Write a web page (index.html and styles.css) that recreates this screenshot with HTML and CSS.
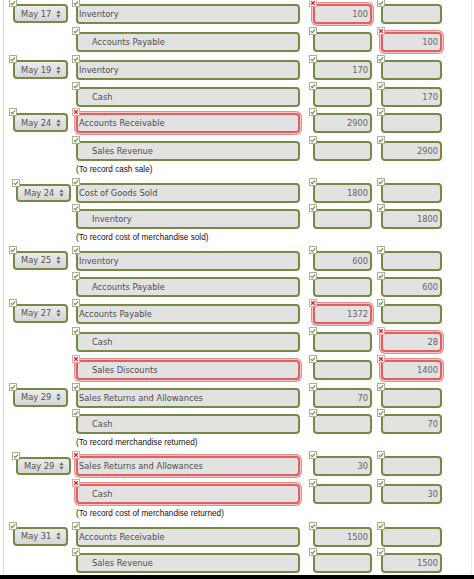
FILE: index.html
```html
<!DOCTYPE html>
<html>
<head>
<meta charset="utf-8">
<link rel="stylesheet" href="styles.css">
</head>
<body>
<div class="sheet">

  <div class="row err">
    <div class="date-cell"><div class="box date"><span>May 17</span><svg class="arrows" viewBox="0 0 5 8"><path d="M2.5 0.3L4.6 3.2H0.4Z M0.4 4.8H4.6L2.5 7.7Z"/></svg><svg class="badge" viewBox="0 0 8 8"><rect x="0.5" y="0.5" width="7" height="7" class="bk"/><path d="M1.8 4.2L3.3 5.6L6.2 2.4" class="ck"/></svg></div></div>
    <div class="box acct">Inventory<svg class="badge" viewBox="0 0 8 8"><rect x="0.5" y="0.5" width="7" height="7" class="bk"/><path d="M1.8 4.2L3.3 5.6L6.2 2.4" class="ck"/></svg></div>
    <div class="box amt bad">100<svg class="badge" viewBox="0 0 8 8"><rect x="0.5" y="0.5" width="7" height="7" class="bx"/><path d="M2.2 2.2L5.8 5.8M5.8 2.2L2.2 5.8" class="xx"/></svg></div>
    <div class="box amt cr"><svg class="badge" viewBox="0 0 8 8"><rect x="0.5" y="0.5" width="7" height="7" class="bk"/><path d="M1.8 4.2L3.3 5.6L6.2 2.4" class="ck"/></svg></div>
  </div>

  <div class="row err">
    <div class="date-cell"></div>
    <div class="box acct ind">Accounts Payable<svg class="badge" viewBox="0 0 8 8"><rect x="0.5" y="0.5" width="7" height="7" class="bk"/><path d="M1.8 4.2L3.3 5.6L6.2 2.4" class="ck"/></svg></div>
    <div class="box amt"><svg class="badge" viewBox="0 0 8 8"><rect x="0.5" y="0.5" width="7" height="7" class="bk"/><path d="M1.8 4.2L3.3 5.6L6.2 2.4" class="ck"/></svg></div>
    <div class="box amt cr bad">100<svg class="badge" viewBox="0 0 8 8"><rect x="0.5" y="0.5" width="7" height="7" class="bx"/><path d="M2.2 2.2L5.8 5.8M5.8 2.2L2.2 5.8" class="xx"/></svg></div>
  </div>

  <div class="row">
    <div class="date-cell"><div class="box date"><span>May 19</span><svg class="arrows" viewBox="0 0 5 8"><path d="M2.5 0.3L4.6 3.2H0.4Z M0.4 4.8H4.6L2.5 7.7Z"/></svg><svg class="badge" viewBox="0 0 8 8"><rect x="0.5" y="0.5" width="7" height="7" class="bk"/><path d="M1.8 4.2L3.3 5.6L6.2 2.4" class="ck"/></svg></div></div>
    <div class="box acct">Inventory<svg class="badge" viewBox="0 0 8 8"><rect x="0.5" y="0.5" width="7" height="7" class="bk"/><path d="M1.8 4.2L3.3 5.6L6.2 2.4" class="ck"/></svg></div>
    <div class="box amt">170<svg class="badge" viewBox="0 0 8 8"><rect x="0.5" y="0.5" width="7" height="7" class="bk"/><path d="M1.8 4.2L3.3 5.6L6.2 2.4" class="ck"/></svg></div>
    <div class="box amt cr"><svg class="badge" viewBox="0 0 8 8"><rect x="0.5" y="0.5" width="7" height="7" class="bk"/><path d="M1.8 4.2L3.3 5.6L6.2 2.4" class="ck"/></svg></div>
  </div>

  <div class="row">
    <div class="date-cell"></div>
    <div class="box acct ind">Cash<svg class="badge" viewBox="0 0 8 8"><rect x="0.5" y="0.5" width="7" height="7" class="bk"/><path d="M1.8 4.2L3.3 5.6L6.2 2.4" class="ck"/></svg></div>
    <div class="box amt"><svg class="badge" viewBox="0 0 8 8"><rect x="0.5" y="0.5" width="7" height="7" class="bk"/><path d="M1.8 4.2L3.3 5.6L6.2 2.4" class="ck"/></svg></div>
    <div class="box amt cr">170<svg class="badge" viewBox="0 0 8 8"><rect x="0.5" y="0.5" width="7" height="7" class="bk"/><path d="M1.8 4.2L3.3 5.6L6.2 2.4" class="ck"/></svg></div>
  </div>

  <div class="row err">
    <div class="date-cell"><div class="box date"><span>May 24</span><svg class="arrows" viewBox="0 0 5 8"><path d="M2.5 0.3L4.6 3.2H0.4Z M0.4 4.8H4.6L2.5 7.7Z"/></svg><svg class="badge" viewBox="0 0 8 8"><rect x="0.5" y="0.5" width="7" height="7" class="bk"/><path d="M1.8 4.2L3.3 5.6L6.2 2.4" class="ck"/></svg></div></div>
    <div class="box acct bad">Accounts Receivable<svg class="badge" viewBox="0 0 8 8"><rect x="0.5" y="0.5" width="7" height="7" class="bx"/><path d="M2.2 2.2L5.8 5.8M5.8 2.2L2.2 5.8" class="xx"/></svg></div>
    <div class="box amt">2900<svg class="badge" viewBox="0 0 8 8"><rect x="0.5" y="0.5" width="7" height="7" class="bk"/><path d="M1.8 4.2L3.3 5.6L6.2 2.4" class="ck"/></svg></div>
    <div class="box amt cr"><svg class="badge" viewBox="0 0 8 8"><rect x="0.5" y="0.5" width="7" height="7" class="bk"/><path d="M1.8 4.2L3.3 5.6L6.2 2.4" class="ck"/></svg></div>
  </div>

  <div class="row">
    <div class="date-cell"></div>
    <div class="box acct ind">Sales Revenue<svg class="badge" viewBox="0 0 8 8"><rect x="0.5" y="0.5" width="7" height="7" class="bk"/><path d="M1.8 4.2L3.3 5.6L6.2 2.4" class="ck"/></svg></div>
    <div class="box amt"><svg class="badge" viewBox="0 0 8 8"><rect x="0.5" y="0.5" width="7" height="7" class="bk"/><path d="M1.8 4.2L3.3 5.6L6.2 2.4" class="ck"/></svg></div>
    <div class="box amt cr">2900<svg class="badge" viewBox="0 0 8 8"><rect x="0.5" y="0.5" width="7" height="7" class="bk"/><path d="M1.8 4.2L3.3 5.6L6.2 2.4" class="ck"/></svg></div>
  </div>

  <div class="note">(To record cash sale)</div>

  <div class="row">
    <div class="date-cell"><div class="box date shift"><span>May 24</span><svg class="arrows" viewBox="0 0 5 8"><path d="M2.5 0.3L4.6 3.2H0.4Z M0.4 4.8H4.6L2.5 7.7Z"/></svg><svg class="badge" viewBox="0 0 8 8"><rect x="0.5" y="0.5" width="7" height="7" class="bk"/><path d="M1.8 4.2L3.3 5.6L6.2 2.4" class="ck"/></svg></div></div>
    <div class="box acct">Cost of Goods Sold<svg class="badge" viewBox="0 0 8 8"><rect x="0.5" y="0.5" width="7" height="7" class="bk"/><path d="M1.8 4.2L3.3 5.6L6.2 2.4" class="ck"/></svg></div>
    <div class="box amt">1800<svg class="badge" viewBox="0 0 8 8"><rect x="0.5" y="0.5" width="7" height="7" class="bk"/><path d="M1.8 4.2L3.3 5.6L6.2 2.4" class="ck"/></svg></div>
    <div class="box amt cr"><svg class="badge" viewBox="0 0 8 8"><rect x="0.5" y="0.5" width="7" height="7" class="bk"/><path d="M1.8 4.2L3.3 5.6L6.2 2.4" class="ck"/></svg></div>
  </div>

  <div class="row">
    <div class="date-cell"></div>
    <div class="box acct ind">Inventory<svg class="badge" viewBox="0 0 8 8"><rect x="0.5" y="0.5" width="7" height="7" class="bk"/><path d="M1.8 4.2L3.3 5.6L6.2 2.4" class="ck"/></svg></div>
    <div class="box amt"><svg class="badge" viewBox="0 0 8 8"><rect x="0.5" y="0.5" width="7" height="7" class="bk"/><path d="M1.8 4.2L3.3 5.6L6.2 2.4" class="ck"/></svg></div>
    <div class="box amt cr">1800<svg class="badge" viewBox="0 0 8 8"><rect x="0.5" y="0.5" width="7" height="7" class="bk"/><path d="M1.8 4.2L3.3 5.6L6.2 2.4" class="ck"/></svg></div>
  </div>

  <div class="note">(To record cost of merchandise sold)</div>

  <div class="row">
    <div class="date-cell"><div class="box date"><span>May 25</span><svg class="arrows" viewBox="0 0 5 8"><path d="M2.5 0.3L4.6 3.2H0.4Z M0.4 4.8H4.6L2.5 7.7Z"/></svg><svg class="badge" viewBox="0 0 8 8"><rect x="0.5" y="0.5" width="7" height="7" class="bk"/><path d="M1.8 4.2L3.3 5.6L6.2 2.4" class="ck"/></svg></div></div>
    <div class="box acct">Inventory<svg class="badge" viewBox="0 0 8 8"><rect x="0.5" y="0.5" width="7" height="7" class="bk"/><path d="M1.8 4.2L3.3 5.6L6.2 2.4" class="ck"/></svg></div>
    <div class="box amt">600<svg class="badge" viewBox="0 0 8 8"><rect x="0.5" y="0.5" width="7" height="7" class="bk"/><path d="M1.8 4.2L3.3 5.6L6.2 2.4" class="ck"/></svg></div>
    <div class="box amt cr"><svg class="badge" viewBox="0 0 8 8"><rect x="0.5" y="0.5" width="7" height="7" class="bk"/><path d="M1.8 4.2L3.3 5.6L6.2 2.4" class="ck"/></svg></div>
  </div>

  <div class="row">
    <div class="date-cell"></div>
    <div class="box acct ind">Accounts Payable<svg class="badge" viewBox="0 0 8 8"><rect x="0.5" y="0.5" width="7" height="7" class="bk"/><path d="M1.8 4.2L3.3 5.6L6.2 2.4" class="ck"/></svg></div>
    <div class="box amt"><svg class="badge" viewBox="0 0 8 8"><rect x="0.5" y="0.5" width="7" height="7" class="bk"/><path d="M1.8 4.2L3.3 5.6L6.2 2.4" class="ck"/></svg></div>
    <div class="box amt cr">600<svg class="badge" viewBox="0 0 8 8"><rect x="0.5" y="0.5" width="7" height="7" class="bk"/><path d="M1.8 4.2L3.3 5.6L6.2 2.4" class="ck"/></svg></div>
  </div>

  <div class="row err">
    <div class="date-cell"><div class="box date"><span>May 27</span><svg class="arrows" viewBox="0 0 5 8"><path d="M2.5 0.3L4.6 3.2H0.4Z M0.4 4.8H4.6L2.5 7.7Z"/></svg><svg class="badge" viewBox="0 0 8 8"><rect x="0.5" y="0.5" width="7" height="7" class="bk"/><path d="M1.8 4.2L3.3 5.6L6.2 2.4" class="ck"/></svg></div></div>
    <div class="box acct">Accounts Payable<svg class="badge" viewBox="0 0 8 8"><rect x="0.5" y="0.5" width="7" height="7" class="bk"/><path d="M1.8 4.2L3.3 5.6L6.2 2.4" class="ck"/></svg></div>
    <div class="box amt bad">1372<svg class="badge" viewBox="0 0 8 8"><rect x="0.5" y="0.5" width="7" height="7" class="bx"/><path d="M2.2 2.2L5.8 5.8M5.8 2.2L2.2 5.8" class="xx"/></svg></div>
    <div class="box amt cr"><svg class="badge" viewBox="0 0 8 8"><rect x="0.5" y="0.5" width="7" height="7" class="bk"/><path d="M1.8 4.2L3.3 5.6L6.2 2.4" class="ck"/></svg></div>
  </div>

  <div class="row err">
    <div class="date-cell"></div>
    <div class="box acct ind">Cash<svg class="badge" viewBox="0 0 8 8"><rect x="0.5" y="0.5" width="7" height="7" class="bk"/><path d="M1.8 4.2L3.3 5.6L6.2 2.4" class="ck"/></svg></div>
    <div class="box amt"><svg class="badge" viewBox="0 0 8 8"><rect x="0.5" y="0.5" width="7" height="7" class="bk"/><path d="M1.8 4.2L3.3 5.6L6.2 2.4" class="ck"/></svg></div>
    <div class="box amt cr bad">28<svg class="badge" viewBox="0 0 8 8"><rect x="0.5" y="0.5" width="7" height="7" class="bx"/><path d="M2.2 2.2L5.8 5.8M5.8 2.2L2.2 5.8" class="xx"/></svg></div>
  </div>

  <div class="row err">
    <div class="date-cell"></div>
    <div class="box acct ind bad">Sales Discounts<svg class="badge" viewBox="0 0 8 8"><rect x="0.5" y="0.5" width="7" height="7" class="bx"/><path d="M2.2 2.2L5.8 5.8M5.8 2.2L2.2 5.8" class="xx"/></svg></div>
    <div class="box amt"><svg class="badge" viewBox="0 0 8 8"><rect x="0.5" y="0.5" width="7" height="7" class="bk"/><path d="M1.8 4.2L3.3 5.6L6.2 2.4" class="ck"/></svg></div>
    <div class="box amt cr bad">1400<svg class="badge" viewBox="0 0 8 8"><rect x="0.5" y="0.5" width="7" height="7" class="bx"/><path d="M2.2 2.2L5.8 5.8M5.8 2.2L2.2 5.8" class="xx"/></svg></div>
  </div>

  <div class="row">
    <div class="date-cell"><div class="box date"><span>May 29</span><svg class="arrows" viewBox="0 0 5 8"><path d="M2.5 0.3L4.6 3.2H0.4Z M0.4 4.8H4.6L2.5 7.7Z"/></svg><svg class="badge" viewBox="0 0 8 8"><rect x="0.5" y="0.5" width="7" height="7" class="bk"/><path d="M1.8 4.2L3.3 5.6L6.2 2.4" class="ck"/></svg></div></div>
    <div class="box acct">Sales Returns and Allowances<svg class="badge" viewBox="0 0 8 8"><rect x="0.5" y="0.5" width="7" height="7" class="bk"/><path d="M1.8 4.2L3.3 5.6L6.2 2.4" class="ck"/></svg></div>
    <div class="box amt">70<svg class="badge" viewBox="0 0 8 8"><rect x="0.5" y="0.5" width="7" height="7" class="bk"/><path d="M1.8 4.2L3.3 5.6L6.2 2.4" class="ck"/></svg></div>
    <div class="box amt cr"><svg class="badge" viewBox="0 0 8 8"><rect x="0.5" y="0.5" width="7" height="7" class="bk"/><path d="M1.8 4.2L3.3 5.6L6.2 2.4" class="ck"/></svg></div>
  </div>

  <div class="row">
    <div class="date-cell"></div>
    <div class="box acct ind">Cash<svg class="badge" viewBox="0 0 8 8"><rect x="0.5" y="0.5" width="7" height="7" class="bk"/><path d="M1.8 4.2L3.3 5.6L6.2 2.4" class="ck"/></svg></div>
    <div class="box amt"><svg class="badge" viewBox="0 0 8 8"><rect x="0.5" y="0.5" width="7" height="7" class="bk"/><path d="M1.8 4.2L3.3 5.6L6.2 2.4" class="ck"/></svg></div>
    <div class="box amt cr">70<svg class="badge" viewBox="0 0 8 8"><rect x="0.5" y="0.5" width="7" height="7" class="bk"/><path d="M1.8 4.2L3.3 5.6L6.2 2.4" class="ck"/></svg></div>
  </div>

  <div class="note">(To record merchandise returned)</div>

  <div class="row err">
    <div class="date-cell"><div class="box date shift"><span>May 29</span><svg class="arrows" viewBox="0 0 5 8"><path d="M2.5 0.3L4.6 3.2H0.4Z M0.4 4.8H4.6L2.5 7.7Z"/></svg><svg class="badge" viewBox="0 0 8 8"><rect x="0.5" y="0.5" width="7" height="7" class="bk"/><path d="M1.8 4.2L3.3 5.6L6.2 2.4" class="ck"/></svg></div></div>
    <div class="box acct bad">Sales Returns and Allowances<svg class="badge" viewBox="0 0 8 8"><rect x="0.5" y="0.5" width="7" height="7" class="bx"/><path d="M2.2 2.2L5.8 5.8M5.8 2.2L2.2 5.8" class="xx"/></svg></div>
    <div class="box amt">30<svg class="badge" viewBox="0 0 8 8"><rect x="0.5" y="0.5" width="7" height="7" class="bk"/><path d="M1.8 4.2L3.3 5.6L6.2 2.4" class="ck"/></svg></div>
    <div class="box amt cr"><svg class="badge" viewBox="0 0 8 8"><rect x="0.5" y="0.5" width="7" height="7" class="bk"/><path d="M1.8 4.2L3.3 5.6L6.2 2.4" class="ck"/></svg></div>
  </div>

  <div class="row err">
    <div class="date-cell"></div>
    <div class="box acct ind bad">Cash<svg class="badge" viewBox="0 0 8 8"><rect x="0.5" y="0.5" width="7" height="7" class="bx"/><path d="M2.2 2.2L5.8 5.8M5.8 2.2L2.2 5.8" class="xx"/></svg></div>
    <div class="box amt"><svg class="badge" viewBox="0 0 8 8"><rect x="0.5" y="0.5" width="7" height="7" class="bk"/><path d="M1.8 4.2L3.3 5.6L6.2 2.4" class="ck"/></svg></div>
    <div class="box amt cr">30<svg class="badge" viewBox="0 0 8 8"><rect x="0.5" y="0.5" width="7" height="7" class="bk"/><path d="M1.8 4.2L3.3 5.6L6.2 2.4" class="ck"/></svg></div>
  </div>

  <div class="note">(To record cost of merchandise returned)</div>

  <div class="row">
    <div class="date-cell"><div class="box date"><span>May 31</span><svg class="arrows" viewBox="0 0 5 8"><path d="M2.5 0.3L4.6 3.2H0.4Z M0.4 4.8H4.6L2.5 7.7Z"/></svg><svg class="badge" viewBox="0 0 8 8"><rect x="0.5" y="0.5" width="7" height="7" class="bk"/><path d="M1.8 4.2L3.3 5.6L6.2 2.4" class="ck"/></svg></div></div>
    <div class="box acct">Accounts Receivable<svg class="badge" viewBox="0 0 8 8"><rect x="0.5" y="0.5" width="7" height="7" class="bk"/><path d="M1.8 4.2L3.3 5.6L6.2 2.4" class="ck"/></svg></div>
    <div class="box amt">1500<svg class="badge" viewBox="0 0 8 8"><rect x="0.5" y="0.5" width="7" height="7" class="bk"/><path d="M1.8 4.2L3.3 5.6L6.2 2.4" class="ck"/></svg></div>
    <div class="box amt cr"><svg class="badge" viewBox="0 0 8 8"><rect x="0.5" y="0.5" width="7" height="7" class="bk"/><path d="M1.8 4.2L3.3 5.6L6.2 2.4" class="ck"/></svg></div>
  </div>

  <div class="row">
    <div class="date-cell"></div>
    <div class="box acct ind">Sales Revenue<svg class="badge" viewBox="0 0 8 8"><rect x="0.5" y="0.5" width="7" height="7" class="bk"/><path d="M1.8 4.2L3.3 5.6L6.2 2.4" class="ck"/></svg></div>
    <div class="box amt"><svg class="badge" viewBox="0 0 8 8"><rect x="0.5" y="0.5" width="7" height="7" class="bk"/><path d="M1.8 4.2L3.3 5.6L6.2 2.4" class="ck"/></svg></div>
    <div class="box amt cr">1500<svg class="badge" viewBox="0 0 8 8"><rect x="0.5" y="0.5" width="7" height="7" class="bk"/><path d="M1.8 4.2L3.3 5.6L6.2 2.4" class="ck"/></svg></div>
  </div>

</div>
<div class="bottom-bar"></div>
</body>
</html>
```

FILE: styles.css
```css
html, body {
  margin: 0;
  padding: 0;
  background: #ffffff;
  overflow: hidden;
  height: 579px;
}

.sheet {
  display: flex;
  flex-direction: column;
  margin-left: 3px;
  width: 469px;
  border-left: 1px solid #dcdcdc;
  border-right: 1px solid #ececec;
  padding: 4px 0 2px 9px;
  box-sizing: border-box;
  font-family: "DejaVu Sans", Verdana, sans-serif;
  font-size: 8.3px;
  color: #555555;
}

.row {
  display: flex;
  flex: 0 0 20px;
  height: 20px;
  margin-top: 6.5px;
}

.row:first-child {
  margin-top: 0;
}

.row.err {
  margin-bottom: 1.5px;
}

.date-cell {
  flex: 0 0 55px;
  min-width: 0;
  margin-right: 8px;
}

.box {
  position: relative;
  box-sizing: border-box;
  height: 20px;
  border: 2px solid #778a45;
  border-radius: 4px;
  background: #e2e2e2;
  display: flex;
  align-items: center;
  white-space: nowrap;
}

.box.bad {
  border-color: #e0605e;
  box-shadow: 0 0 0 1px #f7cccc, 0 0 0 2px #e98a8a;
}

.date {
  width: 55px;
  height: 19px;
  padding: 0 5px 0 6px;
  justify-content: space-between;
  background: linear-gradient(#ebebeb, #d6d6d6);
  color: #555555;
}

.date.shift {
  margin-left: 3px;
  height: 18px;
  margin-top: 1px;
}

.arrows {
  width: 5px;
  height: 8px;
  fill: #666666;
}

.acct {
  flex: 0 0 224px;
  margin-right: 13px;
  padding-left: 1px;
  color: #4d4d4d;
}

.acct.ind {
  padding-left: 14px;
}

.amt {
  flex: 0 0 59px;
  margin-right: 9px;
  justify-content: flex-end;
  padding-right: 2px;
  color: #666666;
}

.amt.cr {
  flex: 0 0 61px;
  margin-right: 0;
}

.badge {
  position: absolute;
  top: -7px;
  left: -6px;
  width: 8px;
  height: 8px;
}

.bk {
  fill: #ffffff;
  stroke: #aab095;
  stroke-width: 1;
}

.ck {
  fill: none;
  stroke: #5c9a30;
  stroke-width: 1.1;
}

.bx {
  fill: #ffffff;
  stroke: #e8a3a3;
  stroke-width: 1;
}

.xx {
  fill: none;
  stroke: #d42424;
  stroke-width: 1.3;
}

.note {
  flex: 0 0 14px;
  margin-top: 1px;
  height: 14px;
  line-height: 15px;
  padding-left: 63px;
  font-family: "Liberation Sans", Arial, sans-serif;
  font-size: 8.2px;
  color: #111111;
}

.bottom-bar {
  height: 20px;
  background: #000000;
}
```
